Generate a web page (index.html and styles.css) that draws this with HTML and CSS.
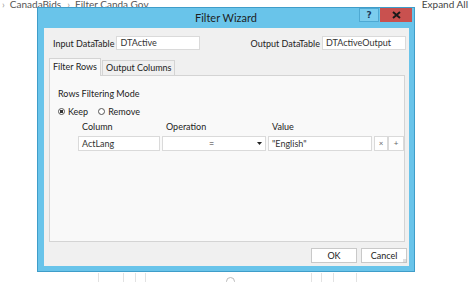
FILE: index.html
```html
<!DOCTYPE html>
<html lang="en">
<head>
    <meta charset="UTF-8">
    <meta name="viewport" content="width=device-width, initial-scale=1.0">
    <title>Filter Wizard</title>
    <link rel="stylesheet" href="styles.css">
</head>
<body>

    <!-- page behind the dialog -->
    <div class="page">
        <div class="crumbs">
            <div class="path"><span class="sep">›</span><span class="crumb">CanadaBids</span><span class="sep">›</span><span class="crumb">Filter Canda Gov</span></div>
            <div class="expand">Expand All</div>
        </div>
        <div class="cols">
            <span class="col-line l1"></span>
            <span class="col-line l2"></span>
            <span class="col-line l3"></span>
            <span class="col-line l4"></span>
            <span class="info-dot"></span>
            <span class="col-line l5"></span>
            <span class="col-line l6"></span>
            <span class="col-line l7"></span>
            <span class="col-line l8"></span>
        </div>
    </div>

    <!-- Filter Wizard dialog -->
    <div class="dialog">
        <div class="titlebar">
            <div></div>
            <div class="title">Filter Wizard</div>
            <div class="caption-btns">
                <div class="cap-help">?</div>
                <div class="cap-close">
                    <svg width="9" height="8" viewBox="0 0 9 8"><path d="M1 1 L8 7 M8 1 L1 7" stroke="#1a1a1a" stroke-width="2"/></svg>
                </div>
            </div>
        </div>

        <div class="client">
            <div class="tables-row">
                <label class="field-label">Input DataTable</label>
                <div class="textbox tb-input">DTActive</div>
                <div class="spacer"></div>
                <label class="field-label">Output DataTable</label>
                <div class="textbox tb-output">DTActiveOutput</div>
            </div>

            <div class="tabs">
                <div class="tab active">Filter Rows</div>
                <div class="tab">Output Columns</div>
            </div>

            <div class="tab-panel">
                <div class="mode-title">Rows Filtering Mode</div>
                <div class="radios">
                    <span class="radio checked"></span><span class="radio-text">Keep</span>
                    <span class="radio"></span><span class="radio-text">Remove</span>
                </div>

                <div class="filter-grid">
                    <div class="col-head">Column</div>
                    <div class="col-head">Operation</div>
                    <div class="col-head">Value</div>
                    <div></div>
                    <div></div>

                    <div class="textbox cell">ActLang</div>
                    <div class="textbox cell select">
                        <span class="select-val">=</span>
                        <svg class="arrow" width="5" height="3" viewBox="0 0 5 3"><path d="M0 0 H5 L2.5 3 Z" fill="#222"/></svg>
                    </div>
                    <div class="textbox cell">"English"</div>
                    <div class="mini-btn">×</div>
                    <div class="mini-btn">+</div>
                </div>
            </div>

            <div class="footer">
                <button class="dlg-btn">OK</button>
                <button class="dlg-btn">Cancel</button>
                <span class="grip"></span>
            </div>
        </div>
    </div>

</body>
</html>
```

FILE: styles.css
```css
body {
    margin: 0;
    width: 474px;
    height: 282px;
    overflow: hidden;
    background-color: #fff;
    font-family: Lato, "Open Sans", sans-serif;
    color: #222;
    position: relative;
}

/* background page */
.page {
    height: 282px;
    display: flex;
    flex-direction: column;
}
.crumbs {
    height: 10px;
    overflow: hidden;
    display: flex;
    justify-content: space-between;
    font-size: 10px;
    line-height: 11px;
    color: #555;
}
.path,
.expand {
    margin-top: -1px;
}
.path {
    padding-left: 2px;
}
.expand {
    padding-right: 6px;
    color: #444;
}
.sep {
    color: #999;
    margin-right: 5px;
}
.crumb {
    margin-right: 6px;
}
.cols {
    margin-top: auto;
    height: 9px;
    display: flex;
    align-items: flex-start;
}
.col-line {
    width: 1px;
    height: 9px;
    background-color: #e2e2e2;
}
.l1 { margin-left: 98px; }
.l2 { margin-left: 24px; }
.l3 { margin-left: 11px; }
.l4 { margin-left: 9px; }
.info-dot {
    margin-left: 80px;
    margin-top: 4px;
    width: 7px;
    height: 7px;
    border: 1px solid #bbb;
    border-radius: 50%;
}
.l5 { margin-left: 76px; }
.l6 { margin-left: 9px; }
.l7 { margin-left: 11px; }
.l8 { margin-left: 22px; }

/* dialog window */
.dialog {
    position: absolute;
    left: 37px;
    top: 7px;
    width: 378px;
    height: 265px;
    box-sizing: border-box;
    background-color: #69c4ea;
    border: 1px solid #3f9dc9;
    display: flex;
    flex-direction: column;
}
.titlebar {
    height: 20px;
    display: grid;
    grid-template-columns: 1fr auto 1fr;
}
.title {
    font-size: 11px;
    line-height: 20px;
    color: #1e1e1e;
}
.caption-btns {
    justify-self: end;
    display: flex;
    height: 14px;
    margin-right: 2px;
}
.cap-help {
    width: 20px;
    box-sizing: border-box;
    border: 1px solid #4ea9d3;
    background-color: #7ccdee;
    font-family: "DejaVu Sans", sans-serif;
    font-weight: bold;
    font-size: 9px;
    line-height: 12px;
    text-align: center;
    color: #1a3a5a;
}
.cap-close {
    width: 32px;
    margin-left: 1px;
    background-color: #c9514f;
    display: flex;
    align-items: center;
    justify-content: center;
}

.client {
    flex: 1;
    margin: 0 5px 5px 6px;
    background-color: #f0f0f0;
    display: flex;
    flex-direction: column;
    font-size: 9px;
}

.tables-row {
    display: flex;
    align-items: center;
    margin-top: 8px;
    padding-left: 9px;
    padding-right: 3px;
}
.field-label {
    margin-right: 2px;
}
.spacer {
    flex: 1;
}
.textbox {
    height: 14px;
    box-sizing: border-box;
    background-color: #fff;
    border: 1px solid #dadada;
    line-height: 12px;
    padding-left: 3px;
    color: #333;
}
.tb-input {
    width: 84px;
}
.tb-output {
    width: 84px;
}

.tabs {
    display: flex;
    align-items: flex-end;
    margin-top: 8px;
    padding-left: 5px;
    height: 17px;
}
.tab {
    height: 15px;
    box-sizing: border-box;
    border: 1px solid #d4d4d4;
    border-bottom: none;
    background-color: #f0f0f0;
    padding: 0 3px;
    line-height: 14px;
    margin-left: 1px;
}
.tab.active {
    height: 18px;
    margin-left: 0;
    margin-bottom: -1px;
    background-color: #f9f9f9;
    line-height: 16px;
    position: relative;
}

.tab-panel {
    height: 167px;
    margin: 0 4px 0 5px;
    box-sizing: border-box;
    border: 1px solid #d4d4d4;
    background-color: #f9f9f9;
    padding: 12px 8px 0 8px;
}
.mode-title {
    line-height: 12px;
}
.radios {
    display: flex;
    align-items: center;
    margin-top: 5px;
    height: 12px;
}
.radio {
    width: 7px;
    height: 7px;
    border: 1px solid #555;
    border-radius: 50%;
    box-sizing: border-box;
    background-color: #fff;
    margin-right: 3px;
}
.radio.checked {
    background: radial-gradient(circle, #333 0 1.6px, #fff 2px);
}
.radio-text {
    margin-right: 10px;
}

.filter-grid {
    display: grid;
    grid-template-columns: 82px 104px 104px 14px 14px;
    grid-template-rows: 16px 15px;
    column-gap: 2px;
    margin-top: 3px;
    margin-left: 20px;
    align-items: end;
}
.col-head {
    padding-left: 4px;
    line-height: 14px;
    align-self: start;
}
.cell {
    height: 15px;
    line-height: 13px;
}
.select {
    display: flex;
    align-items: center;
    position: relative;
}
.select-val {
    flex: 1;
    text-align: center;
}
.arrow {
    margin-right: 3px;
}
.mini-btn {
    height: 15px;
    box-sizing: border-box;
    border: 1px solid #dadada;
    background-color: #fff;
    text-align: center;
    line-height: 13px;
    color: #666;
    font-size: 8px;
}
.mini-btn + .mini-btn {
    margin-left: -2px;
}

.footer {
    display: flex;
    justify-content: flex-end;
    align-items: flex-start;
    margin-top: 6px;
    padding-right: 2px;
    position: relative;
}
.dlg-btn {
    width: 46px;
    height: 15px;
    padding: 0;
    margin-left: 4px;
    font-family: inherit;
    font-size: 9px;
    color: #222;
    background-color: #fff;
    border: 1px solid #c9c9c9;
}
.grip {
    width: 4px;
    height: 4px;
    margin-top: 11px;
    margin-left: -4px;
    background: radial-gradient(circle, #bbb 0.6px, transparent 0.8px) 0 0 / 2px 2px;
}
```
